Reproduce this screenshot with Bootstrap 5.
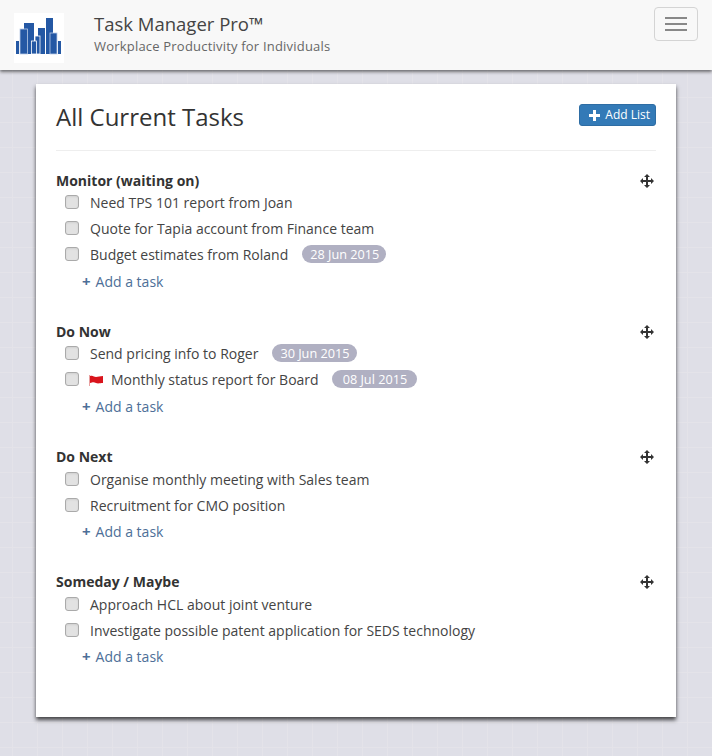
<!DOCTYPE html>
<html lang="en"><head><meta charset="utf-8">
<meta name="viewport" content="width=device-width, initial-scale=1">
<link href="https://cdn.jsdelivr.net/npm/bootstrap@5.3.0/dist/css/bootstrap.min.css" rel="stylesheet">
<style>
html,body{height:756px;overflow:hidden}
body{font-family:"Open Sans",sans-serif;font-size:14px;color:#333;background-color:#dfdfe7;
background-image:linear-gradient(#e4e3e9 1px,transparent 1px),linear-gradient(90deg,#e4e3e9 1px,transparent 1px);background-size:25px 25px;background-position:12px 22px}
.topbar{height:70px;background:#f8f8f8;box-shadow:0 2px 3px rgba(0,0,0,.5);padding:0 14px 0 14px;align-items:flex-start}
.logo-box{width:50px;height:50px;background:#fff;margin-right:30px;margin-top:13px}
.app-block{margin-top:12px}
.app-name{font-size:18.5px;line-height:24px;color:#444}
.app-sub{font-size:13px;letter-spacing:.2px;line-height:20px;color:#666}
.menu-btn{width:44px;height:34px;border:1px solid #d4d4d4;border-radius:4px;background:transparent;padding:0;gap:4px;margin-top:7px}
.menu-btn span{display:block;width:22px;height:2px;background:#888}
.sheet{width:640px;height:633px;margin:14px 0 0 36px;background:#fff;box-shadow:0 3px 4px rgba(0,0,0,.7);padding:0 20px}
.sheet-head{height:67px;padding-bottom:2px;border-bottom:1px solid #eee;margin-bottom:21px}
.sheet-title{font-size:24px;font-weight:400;line-height:33px;color:#333;margin:0}
.add-list{font-size:12px;line-height:18px;padding:1px 5px 1px 9px;background:#337ab7;border:1px solid #2e6da4;border-radius:3px;color:#fff;margin-top:-3px}
.add-list:hover{background:#337ab7;color:#fff}
.plus-ico{margin-right:2px}
.sect{height:125px}
.sect-first{height:151px}
.sect-head{height:18px;font-weight:700;line-height:18px;color:#333;padding-right:2px}
.sect-tight .sect-head{margin-bottom:-1px}
.sect-tight .add-task{margin-top:2px}
.grip{flex:none;margin-top:2px}
.task{height:26px;padding-left:9px;color:#444}
.tick{width:14px;height:14px;border:1px solid #aaa;border-radius:3px;background:#e2e2e2;margin-right:11px;flex:none;box-shadow:inset 0 1px 2px rgba(0,0,0,.08)}
.flag{margin-right:7px;margin-left:-1px;margin-top:3px;flex:none}
.datepill{font-size:12.7px;line-height:18px;background:#b0b0c2;color:#fff;border-radius:9px;padding:0 7px 0 8px;margin-left:14px}
.datepill-wide{padding:0 10px 0 11px;margin-left:13px}
.add-task{display:block;height:26px;line-height:26px;margin-top:1px;padding-left:26px;color:#4d6f97;text-decoration:none}
.add-task:hover{color:#4d6f97}
.add-task i{font-style:normal;font-weight:700;font-size:15px;line-height:1;margin-right:5px}
</style></head><body>
<svg width="0" height="0" class="d-block"><defs><symbol id="grip" viewBox="0 0 14 14"><path d="M7 0l3 3H8v3h3V4l3 3-3 3V8H8v3h2l-3 3-3-3h2V8H3v2L0 7l3-3v2h3V3H4z" fill="#333"/></symbol></defs></svg>
<nav class="navbar topbar d-flex flex-nowrap justify-content-between">
<div class="d-flex">
<div class="logo-box">
<svg width="50" height="50" viewBox="14 13 50 50"><g fill="#2458a4"><rect x="16" y="41" width="3" height="13"/><rect x="24" y="23" width="10" height="31"/><rect x="20" y="29" width="7.5" height="25" stroke="#b9cbe6" stroke-width=".8"/><rect x="38" y="28" width="7" height="26"/><rect x="35" y="36" width="5" height="18" stroke="#fff" stroke-width=".8"/><rect x="31.5" y="41" width="5" height="13" stroke="#fff" stroke-width=".8"/><rect x="46" y="18" width="7" height="36"/><rect x="50" y="33" width="7" height="21" stroke="#b9cbe6" stroke-width=".8"/><rect x="58" y="41" width="3" height="13"/></g></svg>
</div>
<div class="app-block"><div class="app-name">Task Manager Pro™</div><div class="app-sub">Workplace Productivity for Individuals</div></div>
</div>
<button class="menu-btn d-flex flex-column align-items-center justify-content-center" type="button" aria-label="Menu"><span></span><span></span><span></span></button>
</nav>
<main class="sheet">
<div class="sheet-head d-flex justify-content-between align-items-center">
<h1 class="sheet-title">All Current Tasks</h1>
<button class="btn add-list" type="button"><svg width="11" height="11" viewBox="0 0 11 11" class="plus-ico"><path d="M4 0h3v4h4v3H7v4H4V7H0V4h4z" fill="#fff"/></svg> Add List</button>
</div>
<section class="sect sect-first sect-tight">
<div class="sect-head d-flex justify-content-between"><span>Monitor (waiting on)</span><svg class="grip" width="14" height="14"><use href="#grip"/></svg></div>
<div class="task d-flex align-items-center"><span class="tick"></span>Need TPS 101 report from Joan</div>
<div class="task d-flex align-items-center"><span class="tick"></span>Quote for Tapia account from Finance team</div>
<div class="task d-flex align-items-center"><span class="tick"></span>Budget estimates from Roland<span class="datepill">28 Jun 2015</span></div>
<a class="add-task" href="#"><i>+</i>Add a task</a>
</section>
<section class="sect sect-tight">
<div class="sect-head d-flex justify-content-between"><span>Do Now</span><svg class="grip" width="14" height="14"><use href="#grip"/></svg></div>
<div class="task d-flex align-items-center"><span class="tick"></span>Send pricing info to Roger<span class="datepill">30 Jun 2015</span></div>
<div class="task d-flex align-items-center"><span class="tick"></span><svg class="flag" width="15" height="12" viewBox="0 0 15 12"><path d="M0 0h1v11H0z" fill="#e8a0a0"/><path d="M1 1c3-1 4 1 6 1s4-1 7-1v7c-3 0-5 1-7 0S4 7 1 8z" fill="#d9141c"/></svg>Monthly status report for Board<span class="datepill datepill-wide">08 Jul 2015</span></div>
<a class="add-task" href="#"><i>+</i>Add a task</a>
</section>
<section class="sect">
<div class="sect-head d-flex justify-content-between"><span>Do Next</span><svg class="grip" width="14" height="14"><use href="#grip"/></svg></div>
<div class="task d-flex align-items-center"><span class="tick"></span>Organise monthly meeting with Sales team</div>
<div class="task d-flex align-items-center"><span class="tick"></span>Recruitment for CMO position</div>
<a class="add-task" href="#"><i>+</i>Add a task</a>
</section>
<section class="sect">
<div class="sect-head d-flex justify-content-between"><span>Someday / Maybe</span><svg class="grip" width="14" height="14"><use href="#grip"/></svg></div>
<div class="task d-flex align-items-center"><span class="tick"></span>Approach HCL about joint venture</div>
<div class="task d-flex align-items-center"><span class="tick"></span>Investigate possible patent application for SEDS technology</div>
<a class="add-task" href="#"><i>+</i>Add a task</a>
</section>
</main>
<script src="https://cdn.jsdelivr.net/npm/bootstrap@5.3.0/dist/js/bootstrap.bundle.min.js"></script>
</body></html>
